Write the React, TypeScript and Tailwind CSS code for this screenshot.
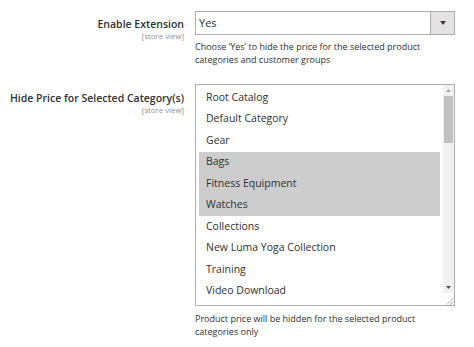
const CATEGORIES = [
  { label: "Root Catalog", selected: false },
  { label: "Default Category", selected: false },
  { label: "Gear", selected: false },
  { label: "Bags", selected: true },
  { label: "Fitness Equipment", selected: true },
  { label: "Watches", selected: true },
  { label: "Collections", selected: false },
  { label: "New Luma Yoga Collection", selected: false },
  { label: "Training", selected: false },
  { label: "Video Download", selected: false }
];

function FieldLabel({ title }: { title: string }) {
  return (
    <div className="w-[184px] shrink-0 text-right">
      <div className="whitespace-nowrap text-[10.5px] font-semibold leading-[14px] text-[#303030]">{title}</div>
      <div className="whitespace-nowrap text-[7.8px] leading-[10px] text-[#8f8f8f]">[store view]</div>
    </div>
  );
}

export default function App() {
  return (
    <div className="h-[347px] w-[474px] bg-white pt-[11px] font-['Open_Sans',sans-serif] text-[#303030]">
      <div className="flex gap-[11px]">
        <div className="pt-[6px]">
          <FieldLabel title="Enable Extension" />
        </div>
        <div className="w-[260px]">
          <div className="flex h-[24px] border border-[#adadad] bg-white">
            <div className="flex flex-1 items-center pl-[3px] text-[11px]">Yes</div>
            <div className="flex w-[24px] items-center justify-center border-l border-[#adadad] bg-[#e3e3e3]">
              <svg width="6" height="4" viewBox="0 0 6 4">
                <path d="M0 0 L6 0 L3 4 Z" fill="#41362f" />
              </svg>
            </div>
          </div>
          <div className="mt-[6px] text-[9px] leading-[12.5px] text-[#303030]">
            Choose ‘Yes’ to hide the price for the selected product categories and customer groups
          </div>
        </div>
      </div>

      <div className="mt-[18px] flex gap-[11px]">
        <div className="pt-[7px]">
          <FieldLabel title="Hide Price for Selected Category(s)" />
        </div>
        <div className="w-[260px]">
          <div className="flex h-[222px] border border-[#adadad] bg-white">
            <div className="flex-1 pl-[3px] pr-[3px] pt-[2px]">
              {CATEGORIES.map((c) => (
                <div
                  key={c.label}
                  className={[
                    "flex h-[21.5px] items-center pl-[7px] text-[10.5px] text-[#303030]",
                    c.selected ? "bg-[#cdcdcd]" : ""
                  ].join(" ")}
                >
                  {c.label}
                </div>
              ))}
            </div>
            <div className="flex w-[11px] flex-col">
              <div className="flex flex-1 flex-col bg-[#f1f1f1]">
                <div className="flex h-[11px] items-center justify-center">
                  <svg width="5" height="3" viewBox="0 0 5 3">
                    <path d="M0 3 L5 3 L2.5 0 Z" fill="#a3a3a3" />
                  </svg>
                </div>
                <div className="mx-px h-[47px] bg-[#c1c1c1]" />
                <div className="flex-1" />
                <div className="flex h-[11px] items-center justify-center">
                  <svg width="5" height="3" viewBox="0 0 5 3">
                    <path d="M0 0 L5 0 L2.5 3 Z" fill="#505050" />
                  </svg>
                </div>
              </div>
              <div className="flex h-[12px] items-end justify-end bg-white">
                <svg width="8" height="8" viewBox="0 0 8 8">
                  <path d="M7.5 1 L1 7.5 M7.5 4.5 L4.5 7.5" stroke="#9a9a9a" strokeWidth="0.8" />
                </svg>
              </div>
            </div>
          </div>
          <div className="mt-[7px] text-[9px] leading-[12.5px] text-[#303030]">
            Product price will be hidden for the selected product categories only
          </div>
        </div>
      </div>
    </div>
  );
}
